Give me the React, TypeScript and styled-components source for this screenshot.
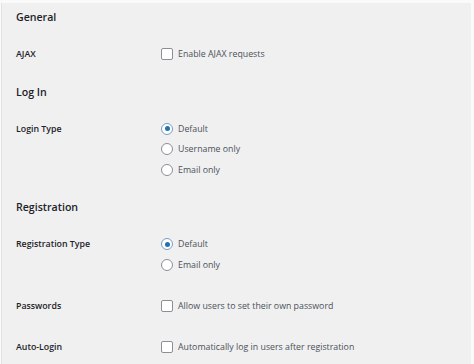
import styled, { createGlobalStyle } from "styled-components"

const GlobalStyle = createGlobalStyle`
  html, body {
    margin: 0;
    padding: 0;
    background: #fafafa;
  }
  body {
    font-family: "Open Sans", "Noto Sans", sans-serif;
    color: #2c3338;
  }
`

type Option = { label: string; checked?: boolean }

const Settings = () => {
  return (
    <Page>
      <Heading>General</Heading>
      <Row>
        <Label>AJAX</Label>
        <Controls>
          <Choice>
            <Checkbox />
            Enable AJAX requests
          </Choice>
        </Controls>
      </Row>

      <Heading>Log In</Heading>
      <Row>
        <Label>Login Type</Label>
        <RadioGroup
          options={[
            { label: "Default", checked: true },
            { label: "Username only" },
            { label: "Email only" },
          ]}
        />
      </Row>

      <Heading>Registration</Heading>
      <Row>
        <Label>Registration Type</Label>
        <RadioGroup
          options={[{ label: "Default", checked: true }, { label: "Email only" }]}
        />
      </Row>
      <Row>
        <Label>Passwords</Label>
        <Controls>
          <Choice>
            <Checkbox />
            Allow users to set their own password
          </Choice>
        </Controls>
      </Row>
      <Row>
        <Label>Auto-Login</Label>
        <Controls>
          <Choice>
            <Checkbox />
            Automatically log in users after registration
          </Choice>
        </Controls>
      </Row>
    </Page>
  )
}

const RadioGroup = ({ options }: { options: Option[] }) => (
  <Controls>
    {options.map((o) => (
      <Choice key={o.label}>
        <Radio $checked={o.checked} />
        {o.label}
      </Choice>
    ))}
  </Controls>
)

export default function App() {
  return (
    <>
      <GlobalStyle />
      <Settings />
    </>
  )
}

const Page = styled.div`
  margin: 3px 3px 0 1px;
  min-height: 358px;
  background: #f0f0f1;
  padding: 0 0 6px 14px;
  box-sizing: border-box;
  border-left: 1px solid #e2e2e4;
`

const Heading = styled.h2`
  margin: 3px 0 6px;
  padding-top: 4px;
  font-size: 10.6px;
  font-weight: 600;
  line-height: 20px;
  color: #1d2327;
  &:first-child {
    margin-top: 0;
  }
`

const Row = styled.div`
  display: grid;
  grid-template-columns: 145px 1fr;
  padding: 11px 0 10px;
  & + & {
    padding-top: 10.5px;
  }
`

const Label = styled.div`
  font-size: 8.8px;
  font-weight: 600;
  line-height: 20px;
  color: #1d2327;
`

const Controls = styled.div`
  display: flex;
  flex-direction: column;
`

const Choice = styled.div`
  display: flex;
  align-items: center;
  gap: 5px;
  height: 20.5px;
  font-size: 8.8px;
  color: #4a5157;
`

const Checkbox = styled.span`
  width: 10px;
  height: 10px;
  border: 1px solid #8c8f94;
  border-radius: 2px;
  background: #fff;
  flex-shrink: 0;
`

const Radio = styled.span<{ $checked?: boolean }>`
  width: 10px;
  height: 10px;
  border: 1px solid ${(p) => (p.$checked ? "#7a9cc4" : "#8c8f94")};
  border-radius: 50%;
  background: #fff;
  flex-shrink: 0;
  display: flex;
  align-items: center;
  justify-content: center;
  &::after {
    content: "";
    width: 5px;
    height: 5px;
    border-radius: 50%;
    background: ${(p) => (p.$checked ? "#2271b1" : "transparent")};
  }
`
